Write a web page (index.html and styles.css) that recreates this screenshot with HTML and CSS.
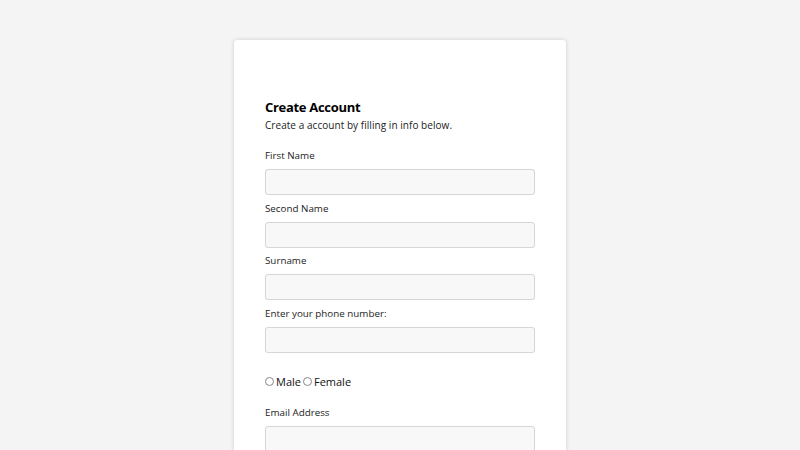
FILE: index.html
```html
<!DOCTYPE html>
<html lang="en">
<head>
<meta charset="utf-8">
<title>Create Account</title>
<link rel="stylesheet" href="styles.css">
</head>
<body>
<main class="card">
  <h1 class="title">Create Account</h1>
  <p class="subtitle">Create a account by filling in info below.</p>
  <form class="form">
    <div class="field">
      <label class="label" for="first">First Name</label>
      <input class="input" id="first" type="text">
    </div>
    <div class="field">
      <label class="label" for="second">Second Name</label>
      <input class="input" id="second" type="text">
    </div>
    <div class="field">
      <label class="label" for="surname">Surname</label>
      <input class="input" id="surname" type="text">
    </div>
    <div class="field">
      <label class="label" for="phone">Enter your phone number:</label>
      <input class="input" id="phone" type="tel">
    </div>
    <div class="gender">
      <label class="radio"><span class="dot"></span>Male</label>
      <label class="radio"><span class="dot"></span>Female</label>
    </div>
    <div class="field">
      <label class="label" for="email">Email Address</label>
      <input class="input" id="email" type="email">
    </div>
  </form>
</main>
</body>
</html>
```
FILE: styles.css
```css
html, body {
  margin: 0;
  padding: 0;
  background: #f4f4f4;
  font-family: "Open Sans", "Liberation Sans", sans-serif;
  color: #111;
}
.card {
  width: 332px;
  box-sizing: border-box;
  margin: 40px auto 0;
  padding: 58px 31px 40px;
  background: #fff;
  border-radius: 3px;
  box-shadow: 0 0 4px rgba(0, 0, 0, 0.16);
  min-height: 500px;
}
.title {
  margin: 0 0 2px;
  font-size: 13px;
  line-height: 18px;
  font-weight: 700;
  letter-spacing: -0.3px;
  color: #000;
}
.subtitle {
  margin: 0 0 17px;
  font-size: 10px;
  line-height: 14px;
  color: #222;
  letter-spacing: 0.05px;
}
.form {
  display: flex;
  flex-direction: column;
  gap: 6.5px;
}
.field {
  display: flex;
  flex-direction: column;
}
.label {
  font-size: 9.8px;
  line-height: 14px;
  margin-bottom: 6px;
  color: #222;
}
.input {
  box-sizing: border-box;
  width: 270px;
  height: 26px;
  margin: 0;
  background: #f8f8f8;
  border: 1px solid #d6d6d6;
  border-radius: 3px;
  box-shadow: 0 0 1px rgba(0,0,0,0.05);
}
.gender {
  display: flex;
  align-items: center;
  gap: 2px;
  height: 16px;
  margin: 14.5px 0 9.5px;
  font-size: 11px;
}
.radio {
  display: flex;
  align-items: center;
  gap: 2px;
  color: #111;
}
.dot {
  width: 7px;
  height: 7px;
  border: 1px solid #888;
  border-radius: 50%;
  background: #fff;
}
```
